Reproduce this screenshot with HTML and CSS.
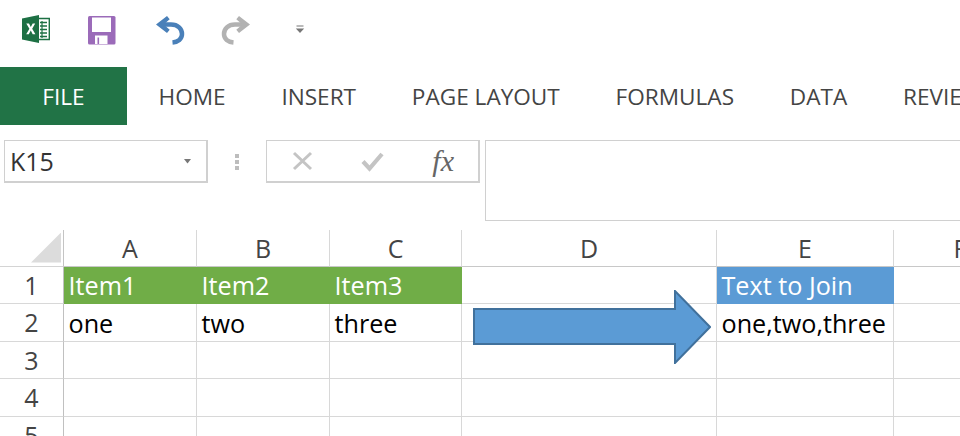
FILE: index.html
```html
<!DOCTYPE html>
<html lang="en">
<head>
<meta charset="utf-8">
<title>Excel join text</title>
<link rel="stylesheet" href="styles.css">
</head>
<body>
<div class="app">
  <div class="qat">
    <svg class="ic-excel" width="30" height="30" viewBox="0 0 30 30">
      <path fill="#fff" stroke="#1d7044" stroke-width="1.4" d="M14 4.500h14.300v21H14z"/>
      <path stroke="#1d7044" stroke-width="1.600" d="M19 8.500h7M19 12h7M19 15.500h7M19 19h7M19 22.500h7"/>
      <path stroke="#1d7044" stroke-width="1.200" d="M21 7v17"/>
      <path fill="#1d7044" d="M1 4.500 18 1v28L1 25.500z"/>
      <path fill="#fff" d="M5.300 9.500h2.700l1.800 3.500 1.900-3.500h2.500l-3 5.200 3.200 5.500h-2.700l-1.900-3.700-2 3.700H5.200l3.200-5.500z"/>
    </svg>
    <svg class="ic-save" width="28" height="29" viewBox="0 0 28 29">
      <rect x="0" y="0" width="27.500" height="28.500" rx="1.500" fill="#9b6bb9"/>
      <rect x="4" y="1.500" width="19" height="14.500" fill="#fff"/>
      <rect x="7" y="19.500" width="12.500" height="8.500" fill="#fff"/>
      <rect x="9.500" y="21.500" width="1.600" height="6.500" fill="#9b6bb9"/>
    </svg>
    <svg class="ic-arrow" width="30" height="30" viewBox="0 0 30 30">
      <path fill="none" stroke="#4a80b9" stroke-width="4.500" d="M6 8.500h10C23 8.500 27 13 27 18c0 5-4 8-9.500 8.500"/>
      <path fill="#4a80b9" d="M1 8.500 12 0l2.700 3.200-6 5.300 6 5.300L12 17z"/>
    </svg>
    <svg class="ic-arrow ic-redo" width="30" height="30" viewBox="0 0 30 30">
      <path fill="none" stroke="#b2b2b2" stroke-width="4.500" d="M24 8.500H14C7 8.500 3 13 3 18c0 5 4 8 9.500 8.500"/>
      <path fill="#b2b2b2" d="M29 8.500 18 0l-2.700 3.200 6 5.300-6 5.300L18 17z"/>
    </svg>
    <svg class="ic-more" width="10" height="10" viewBox="0 0 10 10">
      <path fill="#777" d="M1.500 1.500h7v1h-7zM.8 4.500h8.400L5 9z"/>
    </svg>
  </div>
  <nav class="tabs">
    <div class="tab-file">FILE</div>
    <div class="tab">HOME</div>
    <div class="tab">INSERT</div>
    <div class="tab">PAGE LAYOUT</div>
    <div class="tab">FORMULAS</div>
    <div class="tab">DATA</div>
    <div class="tab">REVIEW</div>
  </nav>
  <div class="formula-row">
    <div class="name-box">
      <span>K15</span>
      <svg width="8" height="5" viewBox="0 0 8 5"><path fill="#777" d="M0 0h7L3.500 4.500z"/></svg>
    </div>
    <div class="grip"><i></i><i></i><i></i></div>
    <div class="fx-box">
      <svg width="21" height="21" viewBox="0 0 21 21"><path stroke="#c4c4c4" stroke-width="3" fill="none" d="M2 2l17 16M19 2 2 18"/></svg>
      <svg width="23" height="21" viewBox="0 0 23 21"><path stroke="#c4c4c4" stroke-width="4.200" fill="none" d="M2 10.500l6.500 7L21 3"/></svg>
      <span class="fx">fx</span>
    </div>
    <div class="formula-input"></div>
  </div>
  <div class="sheet">
    <div class="sheet-grid">
      <div class="corner"><span class="corner-tri"></span></div>
      <div class="col">A</div><div class="col">B</div><div class="col">C</div><div class="col">D</div><div class="col">E</div><div class="col">F</div>

      <div class="row-h">1</div>
      <div class="cell green">Item1</div><div class="cell green">Item2</div><div class="cell green">Item3</div><div class="cell"></div><div class="cell blue">Text to Join</div><div class="cell"></div>

      <div class="row-h">2</div>
      <div class="cell">one</div><div class="cell">two</div><div class="cell">three</div><div class="cell"></div><div class="cell">one,two,three</div><div class="cell"></div>

      <div class="row-h">3</div>
      <div class="cell"></div><div class="cell"></div><div class="cell"></div><div class="cell"></div><div class="cell"></div><div class="cell"></div>

      <div class="row-h">4</div>
      <div class="cell"></div><div class="cell"></div><div class="cell"></div><div class="cell"></div><div class="cell"></div><div class="cell"></div>

      <div class="row-h">5</div>
      <div class="cell"></div><div class="cell"></div><div class="cell"></div><div class="cell"></div><div class="cell"></div><div class="cell"></div>
    </div>
    <svg class="join-arrow" width="238" height="74" viewBox="0 0 238 74">
      <path fill="#5b9bd5" stroke="#41719c" stroke-width="2" d="M1 19h201V1l35 36-35 36V54H1z"/>
    </svg>
  </div>
</div>
</body>
</html>
```

FILE: styles.css
```css
html, body {
  margin: 0;
  padding: 0;
  background: #fff;
}
.app {
  width: 960px;
  height: 436px;
  overflow: hidden;
  font-family: "Open Sans", "Noto Sans", sans-serif;
  color: #444;
}
.qat {
  height: 67px;
  display: flex;
  align-items: flex-start;
  padding-top: 14px;
  padding-left: 21px;
  box-sizing: border-box;
}
.qat svg { flex: none; }
.ic-excel { margin-right: 37px; }
.ic-save { margin-right: 39px; margin-top: 2px; }
.ic-arrow { margin-right: 36px; margin-top: 2px; }
.ic-redo { margin-right: 44px; }
.ic-more { margin-top: 10px; }
.tabs {
  height: 58px;
  display: flex;
  align-items: center;
  white-space: nowrap;
  font-size: 22.6px;
  color: #444;
}
.tab-file {
  width: 127px;
  height: 58px;
  flex: none;
  background: #217346;
  color: #fff;
  display: flex;
  align-items: center;
  justify-content: center;
}
.tab {
  margin-left: 31.500px;
  flex: none;
}
.tab + .tab { margin-left: 55.800px; }
.formula-row {
  display: flex;
  align-items: flex-start;
  height: 105px;
  padding-top: 15px;
  padding-left: 4px;
  box-sizing: border-box;
}
.name-box {
  width: 204px;
  height: 43px;
  flex: none;
  box-sizing: border-box;
  border: 1px solid #d0d0d0;
  border-bottom-width: 2px;
  border-right-width: 2px;
  display: flex;
  align-items: center;
  justify-content: space-between;
  padding: 0 14px 0 5px;
  font-size: 25px;
  color: #333;
}
.grip {
  width: 58px;
  height: 43px;
  flex: none;
  display: flex;
  flex-direction: column;
  align-items: center;
  justify-content: center;
  gap: 2px;
}
.grip i {
  width: 4px;
  height: 4px;
  background: #bdbdbd;
}
.fx-box {
  width: 214px;
  height: 43px;
  flex: none;
  box-sizing: border-box;
  border: 1px solid #d0d0d0;
  border-bottom-width: 2px;
  border-right-width: 2px;
  display: flex;
  align-items: center;
  justify-content: space-between;
  padding: 0 24px 0 25px;
}
.fx {
  font-family: "Liberation Serif", serif;
  font-style: italic;
  font-size: 30px;
  line-height: 1;
  color: #666;
}
.formula-input {
  margin-left: 5px;
  width: 500px;
  height: 81px;
  box-sizing: border-box;
  border: 1px solid #d0d0d0;
  flex: none;
}
.sheet {
  position: relative;
}
.sheet-grid {
  display: grid;
  grid-template-columns: 64px 133px 133px 132px 255px 177px 133px;
  grid-template-rows: 36.5px repeat(5, 37.5px);
}
.corner {
  position: relative;
  border-bottom: 1px solid #d4d4d4;
  border-right: 1px solid #c4c4c4;
}
.corner-tri {
  position: absolute;
  right: 2px;
  bottom: 3px;
  width: 30px;
  height: 30px;
  background: #dcdcdc;
  clip-path: polygon(100% 0, 100% 100%, 0 100%);
}
.col {
  display: flex;
  align-items: center;
  justify-content: center;
  border-right: 1px solid #d8d8d8;
  border-bottom: 1px solid #c8c8c8;
  font-size: 25px;
  color: #444;
}
.row-h {
  display: flex;
  align-items: center;
  justify-content: center;
  border-bottom: 1px solid #d8d8d8;
  border-right: 1px solid #c0c0c0;
  font-size: 25px;
  color: #444;
}
.cell {
  display: flex;
  align-items: center;
  padding-left: 4.500px;
  padding-top: 1px;
  box-sizing: border-box;
  border-right: 1px solid #d8d8d8;
  border-bottom: 1px solid #d8d8d8;
  font-size: 25.2px;
  color: #000;
  white-space: nowrap;
  overflow: hidden;
}
.green {
  background: #70ad47;
  border-color: #70ad47;
  color: #fff;
}
.blue {
  background: #5b9bd5;
  border-color: #5b9bd5;
  color: #fff;
}
.join-arrow {
  position: absolute;
  left: 473px;
  top: 60px;
}
```
